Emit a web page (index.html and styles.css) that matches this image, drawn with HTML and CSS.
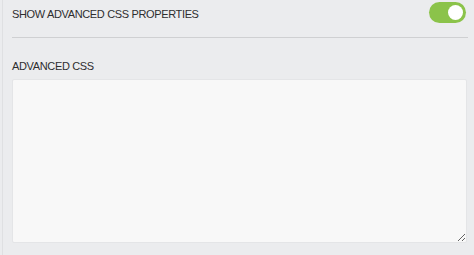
FILE: index.html
```html
<!DOCTYPE html>
<html>
<head>
<meta charset="utf-8">
<link rel="stylesheet" href="styles.css">
</head>
<body>
<div class="panel">
  <div class="row">
    <span class="label">SHOW ADVANCED CSS PROPERTIES</span>
    <span class="toggle"><span class="knob"></span></span>
  </div>
  <div class="section">
    <div class="label">ADVANCED CSS</div>
    <textarea class="css-input"></textarea>
  </div>
</div>
</body>
</html>
```
FILE: styles.css
```css
html, body {
  margin: 0;
  padding: 0;
  background: #ebecee;
}
body {
  width: 474px;
  height: 255px;
  overflow: hidden;
  font-family: "Liberation Sans", Arial, sans-serif;
}
.panel {
  margin-left: 2px;
  border-left: 1px solid #dfe0e2;
  height: 255px;
  padding: 0 6px 0 9px;
  box-sizing: border-box;
}
.label {
  font-size: 11px;
  line-height: 13px;
  color: #2e2e2e;
  letter-spacing: -0.35px;
}
.row {
  display: flex;
  align-items: flex-start;
  justify-content: space-between;
  height: 38px;
  padding-top: 2px;
  box-sizing: border-box;
  border-bottom: 1px solid #cfd0d2;
}
.row .label {
  margin-top: 6px;
}
.toggle {
  width: 37px;
  height: 21px;
  border-radius: 11px;
  background: #8bc34a;
  display: flex;
  align-items: center;
  justify-content: flex-end;
  padding: 0 3px;
  box-sizing: border-box;
  margin-right: 2px;
}
.knob {
  width: 15px;
  height: 15px;
  border-radius: 50%;
  background: #fff;
}
.section {
  padding-top: 22px;
}
.section .label {
  margin-bottom: 6px;
}
.css-input {
  display: block;
  width: 455px;
  height: 164px;
  box-sizing: border-box;
  background: #f8f8f8;
  border: 1px solid #e4e5e7;
  border-radius: 2px;
  resize: vertical;
  margin: 0;
}
```
